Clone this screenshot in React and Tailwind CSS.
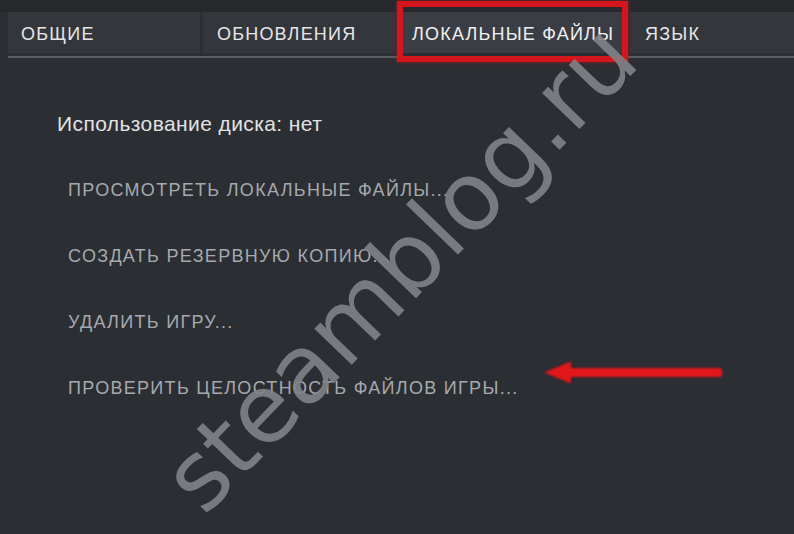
import React from "react";

const tabText = "text-[18px] leading-none text-[#e6e6e6] tracking-[1.2px]";

export default function App() {
  const items = [
    "ПРОСМОТРЕТЬ ЛОКАЛЬНЫЕ ФАЙЛЫ...",
    "СОЗДАТЬ РЕЗЕРВНУЮ КОПИЮ...",
    "УДАЛИТЬ ИГРУ...",
    "ПРОВЕРИТЬ ЦЕЛОСТНОСТЬ ФАЙЛОВ ИГРЫ...",
  ];
  return (
    <div className="relative w-[794px] h-[534px] overflow-hidden bg-[#2b2e33] font-['Liberation_Sans',Arial,sans-serif]">
      <div className="h-[12px] bg-[#26282c]" />
      <div className="flex h-[41px] pl-[8px]">
        <div className={`w-[192px] bg-[#33363b] flex items-center pl-[13px] pt-[2px] ${tabText}`}>ОБЩИЕ</div>
        <div className={`ml-[3px] w-[192px] bg-[#33363b] flex items-center pl-[14px] pt-[2px] ${tabText}`}>ОБНОВЛЕНИЯ</div>
        <div className={`relative ml-[8px] w-[219px] bg-[#3a3d43] flex items-center pl-[9px] pt-[2px] ${tabText} text-[#f0f0f0]`}>
          ЛОКАЛЬНЫЕ ФАЙЛЫ
          <div className="absolute left-[-6px] right-[-6px] top-[-11px] bottom-[-9px] border-[6px] border-[#d3151d] shadow-[0_0_4px_rgba(220,20,30,0.6)]" />
        </div>
        <div className={`ml-[8px] flex-1 bg-[#33363b] flex items-center pl-[15px] pt-[2px] ${tabText}`}>ЯЗЫК</div>
      </div>
      <div className="mt-[3px] ml-[8px] h-[2px] bg-[#5a5d62]" />

      <div className="pl-[57px]">
        <div className="mt-[54px] text-[21px] leading-[24px] text-[#e2e2e2] tracking-[0.4px]">Использование диска: нет</div>
        <div className="mt-[43px] pl-[11px] flex flex-col gap-[44px]">
          {items.map((t) => (
            <div key={t} className="text-[18px] leading-[22px] text-[#a6a9ad] tracking-[1.3px]">
              {t}
            </div>
          ))}
        </div>
      </div>

      <svg className="absolute left-[540px] top-[358px]" width="190" height="30" viewBox="0 0 190 30">
        <defs>
          <filter id="glow" x="-10%" y="-50%" width="120%" height="200%">
            <feGaussianBlur stdDeviation="1.2" />
          </filter>
        </defs>
        <g filter="url(#glow)" fill="#e3141d">
          <rect x="26" y="10" width="156" height="9" rx="2" />
          <path d="M4 14.5 L31 3.5 L31 25.5 Z" />
        </g>
      </svg>

      <div className="absolute left-[400px] top-[268px] w-0 h-0">
        <div className="absolute left-1/2 top-1/2 -translate-x-1/2 -translate-y-1/2 -rotate-[46deg] whitespace-nowrap font-['DejaVu_Sans',sans-serif] text-[95px] leading-none text-[#808387] opacity-90">
          steamblog.ru
        </div>
      </div>
    </div>
  );
}
